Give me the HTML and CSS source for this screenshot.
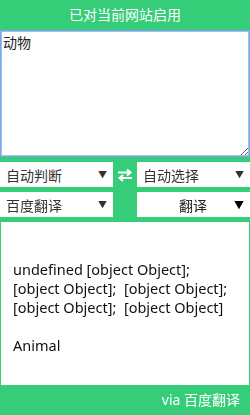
FILE: index.html
```html
<!DOCTYPE html>
<html>
<head>
<meta charset="utf-8">
<link rel="stylesheet" href="styles.css">
</head>
<body>
<div class="app">
  <div class="header">已对当前网站启用</div>
  <textarea class="input" autofocus>动物</textarea>
  <div class="controls">
    <div class="row">
      <div class="select"><span>自动判断</span><span class="arrow">▼</span></div>
      <div class="swap">
        <svg width="16" height="14" viewBox="0 0 16 14">
          <path d="M1 4.5H13M10 1.5L13.5 4.5L10 7.5" fill="none" stroke="#fff" stroke-width="2"/>
          <path d="M15 10H3M6 7L2.5 10L6 13" fill="none" stroke="#fff" stroke-width="2"/>
        </svg>
      </div>
      <div class="select"><span>自动选择</span><span class="arrow">▼</span></div>
    </div>
    <div class="row">
      <div class="select"><span>百度翻译</span><span class="arrow">▼</span></div>
      <div class="swap"></div>
      <div class="select button"><span class="btn-text">翻译</span><span class="arrow big">▼</span></div>
    </div>
  </div>
  <div class="output">
    <p class="result">undefined [object Object];<br>[object Object]; &nbsp;[object Object];<br>[object Object]; &nbsp;[object Object]</p>
    <p class="result">Animal</p>
  </div>
  <div class="footer">via 百度翻译</div>
</div>
</body>
</html>
```
FILE: styles.css
```css
html, body {
  margin: 0;
  padding: 0;
}
body {
  background: #35cd78;
  font-family: "Noto Sans", "Noto Sans CJK SC", sans-serif;
  font-size: 14px;
  color: #222;
}
.app {
  width: 250px;
  height: 415px;
  display: flex;
  flex-direction: column;
}
.header {
  height: 30px;
  line-height: 30px;
  text-align: center;
  color: #fff;
  font-size: 14px;
}
.input {
  box-sizing: border-box;
  width: 250px;
  height: 127px;
  margin: 0;
  border: 1px solid #7aa6e6;
  outline: 1px solid #9cc0f0;
  outline-offset: -2px;
  padding: 1px 2px;
  font-family: "Noto Sans CJK SC", sans-serif;
  font-size: 14px;
  color: #222;
  resize: vertical;
  display: block;
}
.controls {
  display: flex;
  flex-direction: column;
  gap: 5px;
  padding: 5px 0;
}
.row {
  display: flex;
  height: 25px;
}
.select {
  width: 113px;
  background: #fff;
  display: flex;
  align-items: center;
  justify-content: space-between;
  padding: 0 6px;
  box-sizing: border-box;
  font-family: "Noto Sans CJK SC", sans-serif;
  font-size: 14px;
  color: #333;
}
.row .select:last-child {
  width: 113px;
  margin-left: auto;
}
.swap {
  flex: 1;
  display: flex;
  align-items: center;
  justify-content: center;
}
.arrow {
  font-size: 9px;
  color: #333;
}
.arrow.big {
  font-size: 10px;
  color: #000;
}
.button {
  justify-content: flex-end;
  gap: 27px;
}
.btn-text {
  color: #222;
}
.output {
  flex: 1;
  background: #fff;
  margin: 0 1px;
  padding: 38px 12px 0;
  font-family: "Noto Sans", "Noto Sans CJK SC", sans-serif;
  font-size: 14.5px;
  line-height: 19px;
  color: #111;
}
.result {
  margin: 0 0 19px;
}
.footer {
  height: 30px;
  line-height: 30px;
  text-align: right;
  padding-right: 10px;
  color: #fff;
  font-size: 14px;
}
```
